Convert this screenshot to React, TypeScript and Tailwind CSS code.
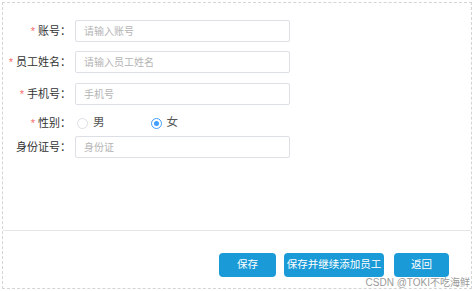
import React from "react";

const font = { fontFamily: '"Liberation Sans", "Noto Sans CJK SC", sans-serif' };

function Row({
  label,
  required,
  className = "",
  children,
}: {
  label: string;
  required?: boolean;
  className?: string;
  children: React.ReactNode;
}) {
  return (
    <div className={`flex items-center ${className}`}>
      <div className="flex w-[72px] justify-end pr-[4px] text-[11px] text-[#333]">
        {required && <span className="mr-[3px] text-[#f56c6c]">*</span>}
        <span>{label}：</span>
      </div>
      {children}
    </div>
  );
}

function Field({ placeholder }: { placeholder: string }) {
  return (
    <input
      readOnly
      placeholder={placeholder}
      className="h-[22px] w-[215px] rounded-[2px] border border-[#dcdfe6] px-[8px] text-[10px] outline-none placeholder:text-[#b4b4b4]"
    />
  );
}

export default function App() {
  return (
    <div className="h-[291px] w-[474px] bg-white p-[2px]" style={font}>
      <div className="relative flex h-[287px] flex-col border border-dashed border-[#d4d4d4]">
        <div className="flex flex-col pt-[17px]">
          <Row label="账号" required>
            <Field placeholder="请输入账号" />
          </Row>
          <Row label="员工姓名" required className="mt-[9px]">
            <Field placeholder="请输入员工姓名" />
          </Row>
          <Row label="手机号" required className="mt-[10px]">
            <Field placeholder="手机号" />
          </Row>
          <Row label="性别" required className="mt-[9px] h-[18px]">
            <div className="flex items-center text-[11.5px] text-[#555]">
              <span className="ml-[2px] h-[11px] w-[11px] rounded-full border border-[#dcdfe6]" />
              <span className="ml-[5px]">男</span>
              <span className="ml-[46px] flex h-[11px] w-[11px] items-center justify-center rounded-full border border-[#409eff]">
                <span className="h-[5px] w-[5px] rounded-full bg-[#409eff]" />
              </span>
              <span className="ml-[5px]">女</span>
            </div>
          </Row>
          <Row label="身份证号" className="mt-[4px]">
            <Field placeholder="身份证" />
          </Row>
        </div>
        <div className="mt-[72px] border-t border-[#e6e6e6]" />
        <div className="mt-[22px] flex gap-[8px] pl-[216px]">
          <button className="h-[24px] w-[57px] rounded-[4px] bg-[#1a9bd7] text-[10.5px] text-white">
            保存
          </button>
          <button className="h-[24px] w-[100px] rounded-[4px] bg-[#1a9bd7] text-[10.5px] text-white">
            保存并继续添加员工
          </button>
          <button className="ml-[2px] h-[24px] w-[55px] rounded-[4px] bg-[#1a9bd7] text-[10.5px] text-white">
            返回
          </button>
        </div>
        <div className="absolute bottom-[-1px] right-[1px] text-[10px] leading-[12px] text-[#9a9a9a]">
          CSDN @TOKI不吃海鲜
        </div>
      </div>
    </div>
  );
}
